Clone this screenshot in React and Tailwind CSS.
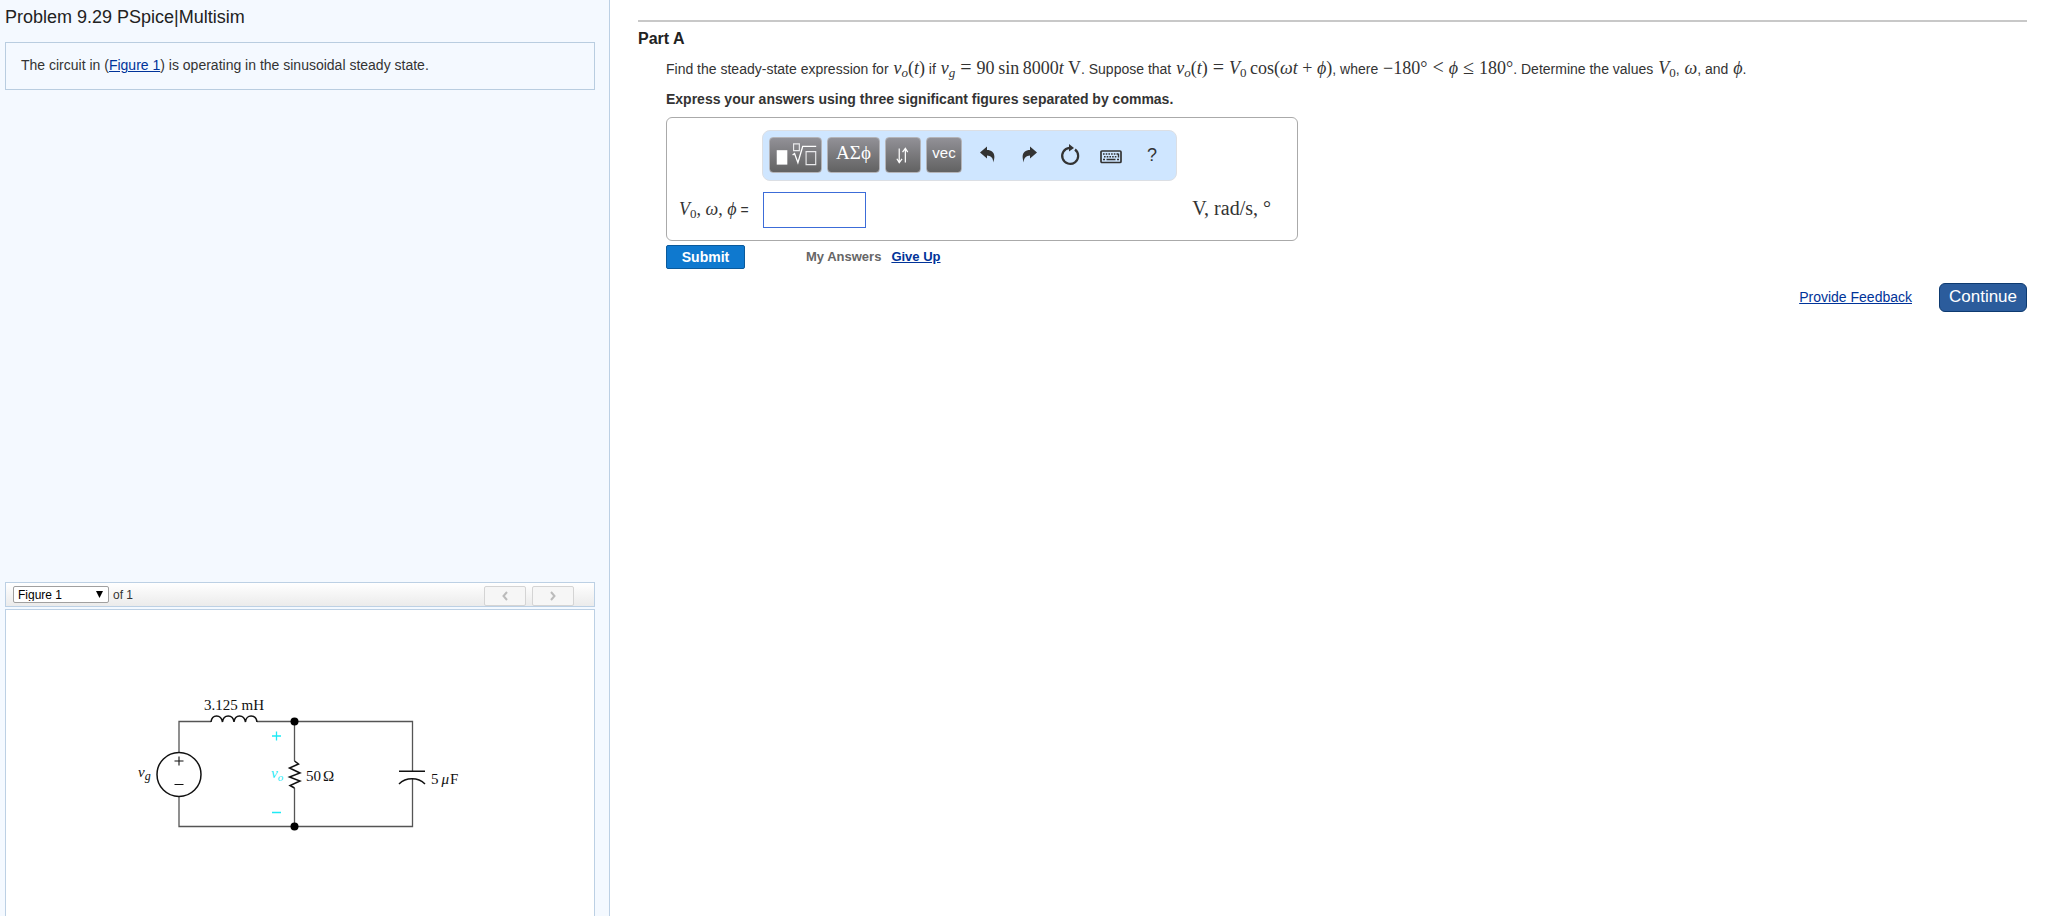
import React from "react";

function M({ children }) {
  return <span className="ml-px font-['Liberation_Serif',serif] text-[18px] leading-5 whitespace-nowrap">{children}</span>;
}

function Sub({ children }) {
  return <sub className="text-[13px] leading-none">{children}</sub>;
}

function Rel({ children }) {
  return <span className="text-[20px] leading-none">{children}</span>;
}

function Circuit() {
  return (
    <svg viewBox="120 680 360 170" className="h-[170px] w-[360px]" role="img" aria-label="Circuit diagram">
      <g fill="none" stroke="#555" strokeWidth="1.3">
        <path d="M179 752V721.5H211M257 721.5H412.5V771M412.5 778V826.5H179V797M294.5 721V761M294.5 788V826" />
      </g>
      <g fill="none" stroke="#111" strokeWidth="1.5">
        <circle cx="179" cy="774.5" r="22" />
        <path d="M211 722C212 714 221 714 222.500 722C223.500 714 233 714 234 722C235 714 244 714 245.500 722C246 714 256 714 257 722" />
        <path d="M294.500 761L298.500 764L289.500 768L300 773L289.500 777L300 781L290 785.500L294.500 788" />
        <path d="M399 771.300H425M399 784C406 777 418 777 425 784" />
        <path d="M174.500 761H183.500M179 756.500V765.500M174.500 784.500H183.500" strokeWidth="1.100" />
      </g>
      <circle cx="294.500" cy="721.500" r="4" />
      <circle cx="294.500" cy="826.500" r="4" />
      <path d="M272 736H281M276.500 731.500V740.500M272 812.500H281" stroke="#1eeaf5" strokeWidth="1.300" fill="none" />
      <g className="font-['Liberation_Serif',serif] text-[15px]" fill="#111">
        <text x="204" y="710">3.125 mH</text>
        <text x="306" y="781">50<tspan dx="2">Ω</tspan></text>
        <text x="431" y="784">5<tspan dx="3" fontStyle="italic">μ</tspan><tspan dx="1">F</tspan></text>
        <text x="138" y="777" fontStyle="italic">v<tspan dy="3" fontSize="12">g</tspan></text>
        <text x="271" y="778" fontStyle="italic" fill="#1eeaf5">v<tspan dy="3" fontSize="11">o</tspan></text>
      </g>
    </svg>
  );
}

const padBtn =
  "flex h-9 items-center justify-center rounded border border-[#b4b4b8] bg-linear-to-b from-[#929197] to-[#626262] text-white";
const iconBtn = "flex h-9 w-[38px] items-center justify-center text-[#333]";
const pagerBtn = "flex h-5 w-[42px] items-center justify-center rounded-xs border border-[#d4d4d4] bg-[#f6f6f6]";

function Toolbar() {
  return (
    <div className="flex h-[51px] w-[415px] items-start rounded-lg border border-[#dcdfe4] bg-[#cfe6ff] pt-1.5 pl-1.5">
      <div className="flex gap-[5px]">
        <button className={`${padBtn} w-[53px]`} aria-label="Templates">
          <svg viewBox="0 0 53 36" className="h-9 w-[53px]">
            <rect x="7" y="13" width="11" height="15" fill="#fff" />
            <path d="M24.500 6.500h6v7h-6zM37.500 14.500h10v13.500h-10z" fill="none" stroke="#e8e8ea" strokeWidth="1.200" />
            <path d="M23.500 18l2-1.500 3.500 9.500 5-17h14" fill="none" stroke="#fff" strokeWidth="1.400" />
          </svg>
        </button>
        <button className={`${padBtn} w-[53px] pb-1 font-['Liberation_Serif',serif] text-[19px]`}>ΑΣϕ</button>
        <button className={`${padBtn} w-9`} aria-label="Scripts">
          <svg viewBox="0 0 36 36" className="size-9" fill="none" stroke="#fff" strokeWidth="1.300">
            <path d="M14 11V26M11.500 22l2.500 4 3-4M20.500 26V11M17.500 15l3-4 2.500 4" />
          </svg>
        </button>
        <button className={`${padBtn} w-9 pb-1 text-[15px]`}>vec</button>
      </div>
      <div className="ml-[7px] flex gap-[3px]">
        <button className={iconBtn} aria-label="Undo">
          <svg viewBox="0 0 16 18" className="h-[18px] w-4" fill="#333">
            <path d="M0 6.500L7 .5V4C13 4 16.500 8.500 13 16.500C13.500 12 11 10 7 9.500V12.500z" />
          </svg>
        </button>
        <button className={iconBtn} aria-label="Redo">
          <svg viewBox="0 0 16 18" className="h-[18px] w-4" fill="#333">
            <path d="M16 6.500L9 .5V4C3 4 -.5 8.500 3 16.500C2.500 12 5 10 9 9.500V12.500z" />
          </svg>
        </button>
        <button className={iconBtn} aria-label="Reset">
          <svg viewBox="0 0 20 22" className="h-[22px] w-5">
            <path d="M15 5.500A8 8 0 1 1 9.500 3.900" fill="none" stroke="#333" strokeWidth="2.200" />
            <path d="M9 0l5 4L9 7.500z" fill="#333" />
          </svg>
        </button>
        <button className={iconBtn} aria-label="Keyboard">
          <svg viewBox="0 0 22 16" className="mt-1 h-4 w-[22px]" fill="none" stroke="#333">
            <rect x="1" y="2" width="20" height="11.500" rx="1" strokeWidth="1.700" />
            <path d="M3 5h16M4 7.700h13" strokeDasharray="1.600 1.100" strokeWidth="1.400" />
            <path d="M3 10.500h2M6.500 10.500h9M17 10.500h2M18.500 4.500v4" strokeWidth="1.400" />
          </svg>
        </button>
        <button className={`${iconBtn} text-[18px]`} aria-label="Help">?</button>
      </div>
    </div>
  );
}

function Answer() {
  return (
    <div className="h-[124px] w-[632px] rounded-md border border-[#aaa] pt-3">
      <div className="pl-[95px]">
        <Toolbar />
      </div>
      <div className="mt-[11px] flex h-9 items-center pr-[26px] pl-[11px]">
        <label htmlFor="answer" className="w-[85px] text-[14px]">
          <M><i>V</i><Sub>0</Sub>, <i>ω</i>, <i>ϕ</i></M> =
        </label>
        <input id="answer" type="text" className="h-9 w-[103px] border border-[#3c6cd8] bg-white px-1 outline-none" />
        <span className="ml-auto pb-1 font-['Liberation_Serif',serif] text-[20px] leading-5">V, rad/s, °</span>
      </div>
    </div>
  );
}

export default function App() {
  return (
    <div className="flex h-screen overflow-hidden bg-white font-['Liberation_Sans',Arial,sans-serif] text-[14px] text-[#333]">
      <aside className="flex w-[610px] shrink-0 flex-col border-r border-[#bcd0e4] bg-[#f4f9ff] pr-3.5 pl-[5px]">
        <h1 className="mt-[5px] text-[18px] leading-6 text-[#222]">Problem 9.29 PSpice|Multisim</h1>
        <div className="mt-[13px] h-12 border border-[#b9cde0] pt-3 pl-[15px]">
          <p className="leading-5">
            The circuit in (<a href="#figure" className="text-[#039] underline">Figure 1</a>) is operating in the sinusoidal steady state.
          </p>
        </div>

        <div className="mt-auto flex h-[25px] items-center border border-[#bcd0e4] bg-linear-to-b from-white to-[#ebebeb] pr-5 pl-[7px]">
          <div className="relative flex">
            <select aria-label="Figure" className="h-[17px] w-24 appearance-none rounded-xs border border-[#a0a0a0] bg-white pl-1 text-[12px] leading-none text-black">
              <option>Figure 1</option>
            </select>
            <svg viewBox="0 0 7 7" className="pointer-events-none absolute top-[5px] right-1.5 size-[7px]"><path d="M0 0H7L3.500 7z" /></svg>
          </div>
          <span className="ml-1 text-[12px]">of 1</span>
          <div className="ml-auto flex gap-1.5 self-end">
            <button className={pagerBtn} aria-label="Previous figure">
              <svg viewBox="0 0 8 10" className="h-2.5 w-2" fill="none" stroke="#bbb" strokeWidth="2"><path d="M6 1L2.500 5L6 9" /></svg>
            </button>
            <button className={pagerBtn} aria-label="Next figure">
              <svg viewBox="0 0 8 10" className="h-2.5 w-2" fill="none" stroke="#bbb" strokeWidth="2"><path d="M2 1L5.500 5L2 9" /></svg>
            </button>
          </div>
        </div>
        <div id="figure" className="mt-0.5 h-[307px] border border-b-0 border-[#bcd0e4] bg-white pt-[70px] pl-[114px]">
          <Circuit />
        </div>
      </aside>

      <main className="min-w-0 flex-1 pt-5 pr-[19px] pl-7">
        <div className="border-t-2 border-[#c8c8c8] pt-[7px]">
          <h2 className="text-[16px] leading-5 font-bold text-[#222]">Part A</h2>
          <div className="pl-7">
            <p className="mt-2 min-h-5 leading-5">
              Find the steady-state expression for <M><i>v</i><Sub><i>o</i></Sub>(<i>t</i>)</M> if{" "}
              <M><i>v</i><Sub><i>g</i></Sub><Rel> = </Rel>90{"\u2009"}sin{"\u2009"}8000<i>t</i> V</M>. Suppose that{" "}
              <M><i>v</i><Sub><i>o</i></Sub>(<i>t</i>)<Rel> = </Rel><i>V</i><Sub>0</Sub>{"\u2009"}cos(<i>ωt</i> + <i>ϕ</i>)</M>, where{" "}
              <M>−180°<Rel> &lt; </Rel><i>ϕ</i><Rel> ≤ </Rel>180°</M>. Determine the values <M><i>V</i><Sub>0</Sub></M>, <M><i>ω</i></M>, and <M><i>ϕ</i></M>.
            </p>
            <p className="mt-2.5 mb-2 leading-5 font-bold">Express your answers using three significant figures separated by commas.</p>
            <Answer />
            <div className="mt-1 flex items-center">
              <button className="h-6 w-[79px] rounded-xs border border-[#0a5a9c] bg-[#0f79cf] text-[14px] leading-none font-bold text-white">Submit</button>
              <span className="ml-[61px] text-[13px] font-bold text-[#666]">My Answers</span>
              <a href="#give-up" className="ml-2.5 text-[13px] font-bold text-[#039] underline">Give Up</a>
            </div>
          </div>
        </div>
        <div className="mt-3.5 flex items-center justify-end gap-[27px]">
          <a href="#feedback" className="text-[14px] text-[#039] underline">Provide Feedback</a>
          <button className="h-[29px] w-[88px] rounded-md border border-[#0d3a70] bg-[#2b5c9c] pb-0.5 text-[17px] leading-none text-white">Continue</button>
        </div>
      </main>
    </div>
  );
}
